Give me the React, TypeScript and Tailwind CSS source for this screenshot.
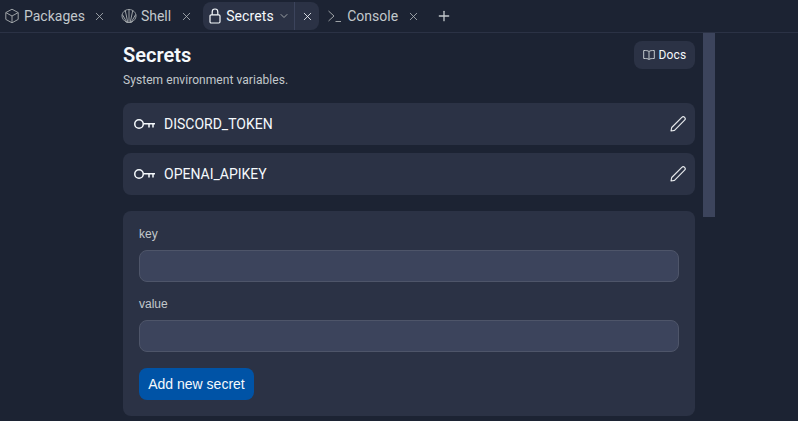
import { Plus, X, ChevronDown } from 'lucide-react'
import type { ReactNode } from 'react'

const FONT = "font-['Roboto','Noto_Sans',sans-serif]"
const ARIAL = "font-['Liberation_Sans',Arial,sans-serif]"

function BoxIcon() {
  return (
    <svg width="16" height="16" viewBox="0 0 16 16" fill="none" stroke="#9da2a6" strokeWidth="1" strokeLinejoin="round">
      <path d="M8 1.200 14.200 4.600v6.800L8 14.800 1.800 11.400V4.600Z" />
      <path d="M1.800 4.600 8 8l6.200-3.400M8 8v6.800" />
    </svg>
  )
}

function ShellIcon() {
  return (
    <svg width="16" height="16" viewBox="0 0 16 16" fill="none" stroke="#9da2a6" strokeWidth="1" strokeLinejoin="round">
      <path d="M6 14.500C3 13 1 10.500 1 8c0-3.500 3-6.500 7-6.500s7 3 7 6.500c0 2.500-2 5-5 6.500Z" />
      <path d="M6.800 14.500 4.300 2.800M8 14.500V1.500M9.200 14.500 11.700 2.800M6 14.500 1.300 6.500M10 14.500 14.700 6.500" />
    </svg>
  )
}

function LockIcon() {
  return (
    <svg width="16" height="16" viewBox="0 0 16 16" fill="none" stroke="#f5f9fc" strokeWidth="1.200" strokeLinejoin="round">
      <rect x="3" y="6.800" width="10" height="8.200" rx="1.200" />
      <path d="M5.200 6.800V3.800a2.800 2.800 0 0 1 5.600 0v3" />
    </svg>
  )
}

function ConsoleIcon() {
  return (
    <svg width="16" height="16" viewBox="0 0 16 16" fill="none" stroke="#9da2a6" strokeWidth="1">
      <path d="M1.500 3 7 8l-5.500 5" />
      <path d="M8.500 13.500H14" />
    </svg>
  )
}

function KeyIcon() {
  return (
    <svg width="21" height="12" viewBox="0 0 21 12" fill="none" stroke="#f5f9fc" strokeWidth="1.500">
      <circle cx="5" cy="6" r="4.250" />
      <path d="M9.250 5.800H21M15 5.800V9.500M19 5.800V9.500" />
    </svg>
  )
}

function PencilIcon() {
  return (
    <svg width="16" height="16" viewBox="0 0 16 16" fill="none" stroke="#e4e7ea" strokeWidth="1.200" strokeLinejoin="round">
      <path d="M1 15 1.700 11.500 11.800 1.400a1.700 1.700 0 0 1 2.800 2.800L4.500 14.300Z" />
    </svg>
  )
}

function BookIcon() {
  return (
    <svg width="12" height="12" viewBox="0 0 12 12" fill="none" stroke="#c2c8cc" strokeWidth="1" strokeLinejoin="round">
      <path d="M6 2.500C5 1.600 3 1.500 .7 1.500v8c2.300 0 4.300 0 5.300 1 1-1 3-1 5.300-1v-8C9 1.500 7 1.600 6 2.500ZM6 2.500v8" />
    </svg>
  )
}

function Tab({ icon, label, className }: { icon: ReactNode; label: string; className: string }) {
  return (
    <div className={`flex h-[32px] items-center ${className}`}>
      <span className="flex w-[16px] shrink-0 justify-center">{icon}</span>
      <span className="ml-[4px] text-[14px] text-[#c2c8cc]">{label}</span>
    </div>
  )
}

function SecretRow({ name }: { name: string }) {
  return (
    <div className="flex h-[42px] items-center rounded-[8px] bg-[#2b3245] bg-[radial-gradient(#3c445c_0.5px,transparent_0.6px),radial-gradient(#3c445c_0.5px,transparent_0.6px)] bg-[size:8px_8px] bg-[position:0_0,4px_4px] pr-[9px] pl-[11px]">
      <KeyIcon />
      <span className="ml-[9px] flex-1 text-[14px] leading-[18px] text-[#f5f9fc]">{name}</span>
      <PencilIcon />
    </div>
  )
}

function Field({ label }: { label: string }) {
  return (
    <label className="flex flex-col">
      <span className={`h-[16px] text-[12px] leading-[16px] text-[#c2c8cc] ${ARIAL}`}>{label}</span>
      <input
        aria-label={label}
        className="mt-[8px] h-[32px] w-full rounded-[8px] border border-[#4e5569] bg-[#3c445c]"
      />
    </label>
  )
}

export default function App() {
  return (
    <div className={`relative flex h-[421px] w-[798px] flex-col overflow-hidden bg-[#1c2333] bg-[radial-gradient(#2b3245_0.5px,transparent_0.6px),radial-gradient(#2b3245_0.5px,transparent_0.6px)] bg-[size:8px_8px] bg-[position:0_0,4px_4px] ${FONT}`}>
      <header className="flex h-[33px] shrink-0 items-center border-b border-[#2b3245]">
        <Tab icon={<BoxIcon />} label="Packages" className="ml-[4px]" />
        <X size={13} strokeWidth={1.500} color="#b0b5ba" className="ml-[8px]" />
        <Tab icon={<ShellIcon />} label="Shell" className="ml-[15px]" />
        <X size={13} strokeWidth={1.500} color="#b0b5ba" className="ml-[9px]" />
        <div className="ml-[10px] flex h-[28px] w-[116px] items-center rounded-[8px] bg-[#2b3245]">
          <span className="ml-[4px] flex w-[16px] justify-center"><LockIcon /></span>
          <span className="ml-[3px] text-[14px] tracking-[0.1px] text-[#f5f9fc]">Secrets</span>
          <ChevronDown size={12} color="#9da2a6" className="ml-[4px]" />
          <span className="ml-[4px] h-full w-px bg-[#3c445c]" />
          <X size={13} strokeWidth={1.500} color="#f5f9fc" className="ml-[6px]" />
        </div>
        <Tab icon={<ConsoleIcon />} label="Console" className="ml-[8px]" />
        <X size={13} strokeWidth={1.500} color="#b0b5ba" className="ml-[9px]" />
        <Plus size={16} strokeWidth={2} color="#c2c8cc" className="ml-[16px]" />
      </header>

      <main className="ml-[123px] flex w-[572px] flex-col">
        <div className="flex h-[70px] items-start justify-between">
          <div className="flex flex-col">
            <h1 className="mt-[9px] text-[20px] leading-[26px] font-semibold text-[#f5f9fc]">Secrets</h1>
            <p className="mt-[4px] text-[12px] leading-[16px] tracking-[0.06px] text-[#c2c8cc]">System environment variables.</p>
          </div>
          <button className="mt-[8px] flex h-[28px] w-[61px] items-center justify-center gap-[4px] rounded-[8px] bg-[#2b3245] text-[12px] tracking-[0.2px] text-[#f5f9fc]">
            <BookIcon />
            Docs
          </button>
        </div>

        <div className="flex flex-col gap-[8px]">
          <SecretRow name="DISCORD_TOKEN" />
          <SecretRow name="OPENAI_APIKEY" />
        </div>

        <form className="mt-[16px] flex h-[205px] flex-col rounded-[8px] bg-[#2b3245] bg-[radial-gradient(#3c445c_0.5px,transparent_0.6px),radial-gradient(#3c445c_0.5px,transparent_0.6px)] bg-[size:8px_8px] bg-[position:0_0,4px_4px] px-[16px] pt-[15px]">
          <Field label="key" />
          <div className="mt-[14px]">
            <Field label="value" />
          </div>
          <button type="button" className={`mt-[16px] h-[32px] w-[115px] rounded-[8px] bg-[#0053a6] text-[14px] text-[#f5f9fc] ${ARIAL}`}>
            Add new secret
          </button>
        </form>
      </main>

      <div className="absolute top-[33px] left-[703px] h-[184px] w-[12px] bg-[#3c445c]" />
    </div>
  )
}
